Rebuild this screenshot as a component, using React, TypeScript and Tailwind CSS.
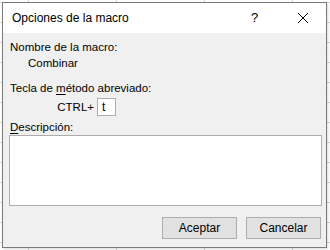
import React from "react";

export default function App() {
  return (
    <div
      className="w-[330px] h-[250px] overflow-hidden bg-white bg-[linear-gradient(to_right,#d4d4d4_1px,transparent_1px),linear-gradient(to_bottom,#d4d4d4_1px,transparent_1px)] bg-size-[88px_20px] bg-position-[28px_2px] pt-[2px] pl-[2px]"
      style={{ fontFamily: '"Liberation Sans", Arial, sans-serif' }}
    >
      <div className="w-[325px] h-[246px] border border-[#7a7a7a] bg-[#f0f0f0] flex flex-col text-[11.5px] text-black shadow-[1px_1px_2px_rgba(0,0,0,0.15)]">
        <div className="h-[30px] bg-white flex items-center shrink-0">
          <span className="pl-[9px] text-[12px] leading-[16px] flex-1">Opciones de la macro</span>
          <span className="w-[10px] text-[13px] leading-[16px] mr-[36px]">?</span>
          <svg width="12" height="12" viewBox="0 0 12 12" className="mr-[17px]">
            <path d="M1 1 L11 11 M11 1 L1 11" stroke="#000" strokeWidth="1" />
          </svg>
        </div>
        <div className="flex flex-col pt-[6px]">
          <div className="pl-[7px] leading-[16px]">Nombre de la macro:</div>
          <div className="pl-[25px] leading-[16px]">Combinar</div>
          <div className="pl-[7px] leading-[16px] mt-[9px]">
            Tecla de <span className="underline underline-offset-2">m</span>étodo abreviado:
          </div>
          <div className="flex items-center mt-[2px] h-[18px]">
            <span className="w-[94px] text-right pr-[3px] leading-[16px]">CTRL+</span>
            <div className="w-[19px] h-[18px] bg-white border border-[#adadad] flex items-center pl-[4px] leading-[14px] text-[12px]">
              t
            </div>
          </div>
          <div className="pl-[7px] leading-[16px] mt-[3px]">
            <span className="underline underline-offset-2">D</span>escripción:
          </div>
          <div className="ml-[6px] w-[313px] h-[71px] bg-white border border-[#adadad]"></div>
          <div className="flex justify-end gap-[9px] mt-[11px] pr-[5px]">
            <button className="w-[75px] h-[22px] bg-[#e1e1e1] border border-[#adadad] text-[12px] leading-[16px]">
              Aceptar
            </button>
            <button className="w-[75px] h-[22px] bg-[#e1e1e1] border border-[#adadad] text-[12px] leading-[16px]">
              Cancelar
            </button>
          </div>
        </div>
      </div>
    </div>
  );
}
